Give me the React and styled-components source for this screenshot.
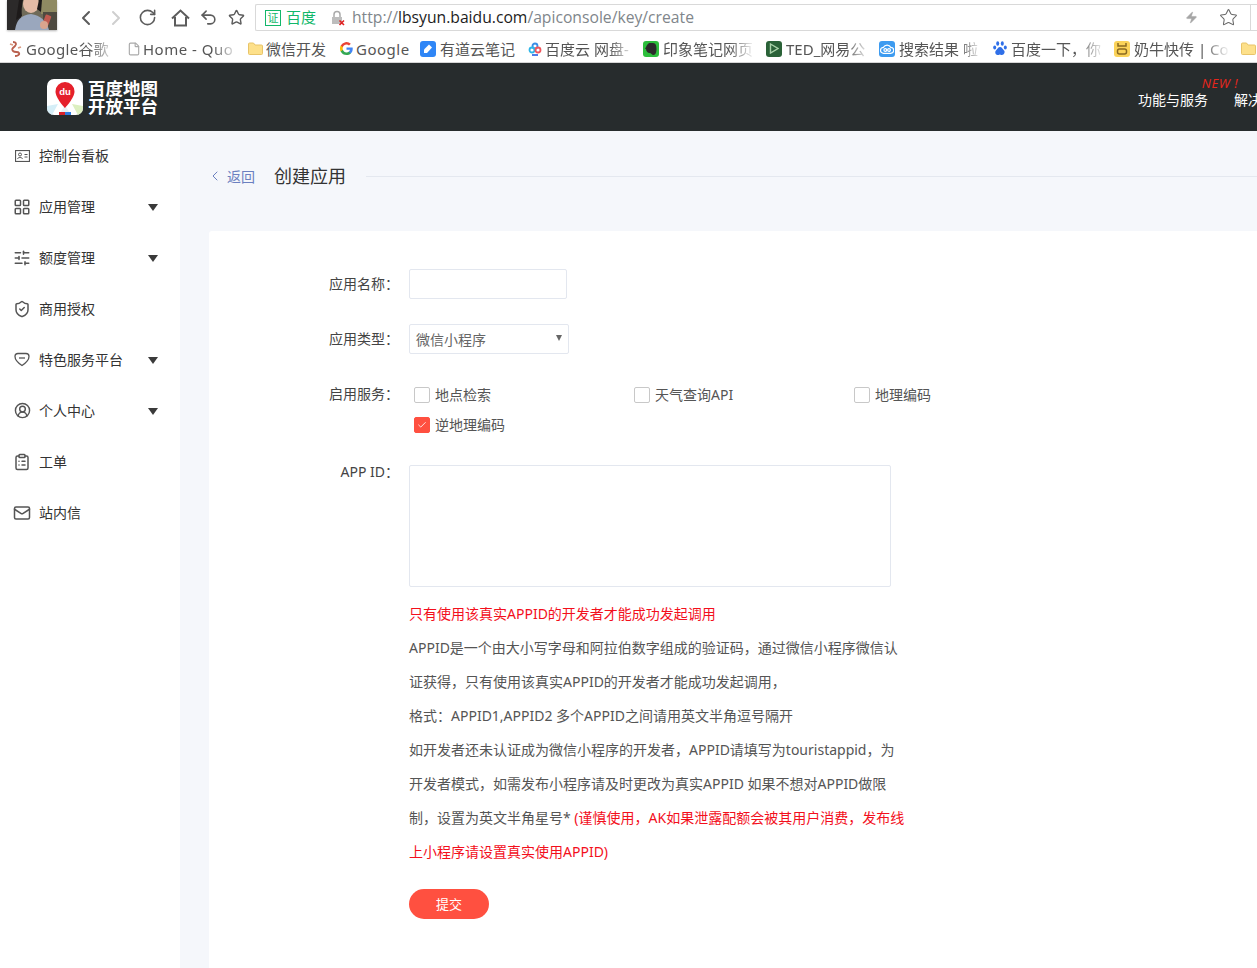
import React from 'react';
import styled, { createGlobalStyle } from 'styled-components';
import { ChevronLeft, ChevronRight, RotateCw, Undo2, Star, LayoutGrid, SlidersHorizontal, ShieldCheck, CircleUserRound, ClipboardList, Mail, Zap, Check, File } from 'lucide-react';

const GlobalStyle = createGlobalStyle`
  html, body { margin: 0; padding: 0; height: 100%; overflow: hidden; background: #fff; }
  body { font-family: "Noto Sans", "Noto Sans CJK SC", sans-serif; color: #333; }
  #root { height: 100%; }
  * { box-sizing: border-box; }
`;

const Page = styled.div`
  width: 1257px;
  height: 968px;
  display: flex;
  flex-direction: column;
  overflow: hidden;
`;

const Toolbar = styled.div`
  height: 33px;
  display: flex;
  align-items: flex-start;
  flex-shrink: 0;
`;

const Avatar = styled.div`
  width: 50px;
  height: 30px;
  margin-left: 7px;
  flex-shrink: 0;
  overflow: hidden;
  box-shadow: 0 1px 2px rgba(0,0,0,.3);
  svg { display: block; }
`;

const NavIcons = styled.div`
  display: flex;
  align-items: center;
  height: 35px;
  width: 198px;
  padding-left: 14px;
  flex-shrink: 0;
`;

const NavBtn = styled.div`
  width: ${p => p.$w}px;
  height: 25px;
  display: flex;
  align-items: center;
  justify-content: center;
  flex-shrink: 0;
  color: ${p => (p.$off ? '#cfcfcf' : '#5c5c5c')};
`;

const UrlBar = styled.div`
  margin-top: 4px;
  width: 1010px;
  height: 27px;
  border: 1px solid #d9d9d9;
  border-right: none;
  border-radius: 2px 0 0 2px;
  display: flex;
  align-items: center;
  padding-left: 9px;
  flex-shrink: 0;
`;

const CertBadge = styled.span`
  width: 16px;
  height: 16px;
  border: 1px solid #12b76a;
  color: #12b76a;
  font-size: 11px;
  line-height: 14px;
  text-align: center;
  flex-shrink: 0;
`;

const CertName = styled.span`
  color: #12b76a;
  font-size: 15px;
  margin-left: 5px;
  margin-bottom: 2px;
  width: 44px;
  flex-shrink: 0;
`;

const LockWrap = styled.span`
  width: 22px;
  display: flex;
  flex-shrink: 0;
`;

const Url = styled.span`
  font-family: "Open Sans", sans-serif;
  font-size: 15.7px;
  margin-bottom: 2px;
  color: #80868b;
  white-space: nowrap;
  b { font-weight: 400; color: #1c1c1c; }
`;

const UrlRight = styled.div`
  margin-left: auto;
  display: flex;
  align-items: center;
  color: #a5a5a5;
  gap: 21px;
  padding-right: 12px;
  height: 100%;
`;

const UrlEdge = styled.div`
  width: 1px;
  height: 25px;
  background: #d9d9d9;
  margin-right: 14px;
`;

const Bookmarks = styled.div`
  height: 30px;
  display: flex;
  align-items: center;
  padding: 2px 0 0 7px;
  border-bottom: 1px solid #d5d5d5;
  flex-shrink: 0;
  overflow: hidden;
`;

const Bookmark = styled.div`
  width: ${p => p.$w}px;
  flex-shrink: 0;
  display: flex;
  align-items: center;
  gap: ${p => p.$gap}px;
`;

const BmIcon = styled.span`
  width: 16px;
  height: 16px;
  flex-shrink: 0;
  border-radius: 3px;
  display: flex;
  align-items: center;
  justify-content: center;
  background: ${p => p.$bg || 'transparent'};
  svg { display: block; }
`;

const BmLabel = styled.span`
  width: ${p => p.$w}px;
  white-space: nowrap;
  overflow: hidden;
  font-size: 15px;
  line-height: 20px;
  letter-spacing: ${p => p.$ls || 0}px;
  color: #555;
  -webkit-mask-image: ${p => (p.$fade ? 'linear-gradient(90deg, #000 72%, transparent 100%)' : 'none')};
  mask-image: ${p => (p.$fade ? 'linear-gradient(90deg, #000 72%, transparent 100%)' : 'none')};
`;

const Header = styled.header`
  height: 68px;
  background: #272c2d;
  display: flex;
  align-items: center;
  justify-content: space-between;
  padding-left: 47px;
  flex-shrink: 0;
  overflow: hidden;
`;

const Logo = styled.div`
  display: flex;
  align-items: center;
  gap: 5px;
`;

const LogoMark = styled.div`
  width: 36px;
  height: 36px;
  svg { display: block; }
`;

const LogoText = styled.div`
  color: #fff;
  font-size: 17.5px;
  line-height: 18.5px;
  font-weight: 700;
  width: 71px;
`;

const TopNav = styled.nav`
  width: 119px;
  flex-shrink: 0;
  display: flex;
  gap: 26px;
  white-space: nowrap;
  padding-top: 5px;
`;

const TopLink = styled.a`
  color: #fff;
  font-size: 14px;
  line-height: 20px;
  position: relative;
  flex-shrink: 0;
`;

const NewTag = styled.i`
  position: absolute;
  right: -30px;
  top: -14px;
  color: #e8261c;
  font-size: 13px;
  line-height: 14px;
  letter-spacing: 0.5px;
  font-family: "Open Sans", sans-serif;
`;

const Body = styled.div`
  flex: 1;
  display: flex;
  min-height: 0;
`;

const Side = styled.aside`
  width: 180px;
  background: #fff;
  flex-shrink: 0;
`;

const SideItem = styled.div`
  height: 51px;
  display: flex;
  align-items: center;
  padding-left: 14px;
  font-size: 14px;
  color: #333;
`;

const SideIcon = styled.span`
  width: 16px;
  height: 16px;
  margin-bottom: 2px;
  display: flex;
  align-items: center;
  justify-content: center;
  color: #555;
  flex-shrink: 0;
  svg { flex-shrink: 0; }
`;

const SideText = styled.span`
  margin: 0 0 4px 9px;
  flex: 1;
`;

const Caret = styled.span`
  width: 0;
  height: 0;
  border-left: 5px solid transparent;
  border-right: 5px solid transparent;
  border-top: 7px solid #3a3a3a;
  margin-right: 22px;
`;

const Main = styled.main`
  flex: 1;
  background: #f5f7fb;
  padding: 33px 0 0 29px;
  display: flex;
  flex-direction: column;
  min-width: 0;
`;

const TitleRow = styled.div`
  height: 24px;
  display: flex;
  align-items: center;
  margin-bottom: 43px;
  flex-shrink: 0;
`;

const BackLink = styled.a`
  display: flex;
  align-items: center;
  color: #6b80c0;
  font-size: 14px;
  gap: 4px;
  margin-right: 19px;
  margin-left: -2px;
`;

const Title = styled.h1`
  margin: 0;
  font-size: 18px;
  font-weight: 400;
  color: #333;
  line-height: 24px;
`;

const Rule = styled.div`
  flex: 1;
  height: 1px;
  background: #e4e8ef;
  margin-left: 20px;
`;

const Card = styled.section`
  flex: 1;
  background: #fff;
  border-radius: 3px 0 0 0;
  padding: 38px 0 0 100px;
`;

const FormRow = styled.div`
  display: grid;
  grid-template-columns: 90px 1fr;
  column-gap: 10px;
  margin-bottom: ${p => p.$mb || 25}px;
`;

const Label = styled.label`
  font-size: 14px;
  line-height: 30px;
  height: 30px;
  color: #444;
  text-align: right;
  white-space: nowrap;
  margin-top: ${p => p.$top || 0}px;
`;

const TextInput = styled.div`
  width: 158px;
  height: 30px;
  border: 1px solid #e3e7ef;
  border-radius: 2px;
  background: #fff;
`;

const Select = styled.div`
  width: 160px;
  height: 30px;
  border: 1px solid #e3e7ef;
  border-radius: 2px;
  display: flex;
  align-items: center;
  justify-content: space-between;
  padding: 0 6px;
  font-size: 14px;
  color: #666;
`;

const SelectArrow = styled.span`
  width: 0;
  height: 0;
  border-left: 3px solid transparent;
  border-right: 3px solid transparent;
  border-top: 6px solid #666;
  margin-top: -2px;
`;

const Checks = styled.div`
  display: grid;
  grid-template-columns: repeat(3, 220px);
  grid-auto-rows: 30px;
  padding-left: 5px;
  margin-top: 1px;
`;

const CheckItem = styled.div`
  display: flex;
  align-items: center;
  gap: 5px;
  font-size: 14px;
  color: #555;
  white-space: nowrap;
`;

const CheckText = styled.span`
  margin-bottom: 2px;
`;

const Box = styled.span`
  width: 16px;
  height: 16px;
  border-radius: 2px;
  border: 1px solid ${p => (p.$on ? '#ff5040' : '#c8c8c8')};
  background: ${p => (p.$on ? '#ff5040' : '#fff')};
  display: flex;
  align-items: center;
  justify-content: center;
  color: #fff;
  flex-shrink: 0;
`;

const TextArea = styled.div`
  width: 482px;
  height: 122px;
  border: 1px solid #e3e7ef;
  border-radius: 2px;
`;

const Help = styled.div`
  margin: 10px 0 0 100px;
  width: 520px;
  font-size: 14px;
  line-height: 34px;
  color: #555;
`;

const HelpLine = styled.div`
  white-space: nowrap;
  height: 34px;
`;

const Red = styled.span`
  color: #f30f1c;
`;

const Submit = styled.button`
  display: block;
  margin: 20px 0 0 100px;
  width: 80px;
  height: 30px;
  border: none;
  border-radius: 15px;
  background: #ff5040;
  color: #fff;
  font-family: inherit;
  font-size: 13px;
  padding: 0 0 2px;
`;

function AvatarPhoto() {
  return (
    <svg width="50" height="30" viewBox="0 0 50 30">
      <rect width="50" height="30" fill="#6f6a58" />
      <rect x="0" y="0" width="14" height="30" fill="#2c2a2a" />
      <rect x="34" y="0" width="16" height="14" fill="#8f8a62" />
      <rect x="36" y="12" width="14" height="18" fill="#4e4a40" />
      <path d="M8 30 Q10 15 24 14 Q38 16 42 30 Z" fill="#9aa7bd" />
      <ellipse cx="24" cy="4" rx="8" ry="9" fill="#e3bba6" />
      <path d="M12 0 L16 0 Q14 10 15 16 L9 20 Z" fill="#1d1a1a" />
      <path d="M32 0 L35 0 L34 12 L30 9 Z" fill="#1d1a1a" />
      <rect x="37" y="15" width="6" height="10" rx="1" fill="#c05a50" transform="rotate(20 40 20)" />
      <ellipse cx="37" cy="25" rx="4" ry="4" fill="#d9a48e" />
    </svg>
  );
}

function HomeIcon() {
  return (
    <svg width="19" height="18" viewBox="0 0 19 18" fill="none" stroke="currentColor" strokeWidth="2">
      <path d="M1 9.5 9.5 1.5 18 9.5" />
      <path d="M4 8v8.5h11V8" />
    </svg>
  );
}

function LockIcon() {
  return (
    <svg width="16" height="16" viewBox="0 0 16 16">
      <path d="M4 7V4.5a3 3 0 0 1 6 0V7" fill="none" stroke="#aaa" strokeWidth="1.5" />
      <rect x="2" y="7" width="10" height="7" fill="#bdbdbd" />
      <path d="M9.5 10.5 14 15M14 10.5 9.5 15" stroke="#e02020" strokeWidth="1.6" />
    </svg>
  );
}

function Folder() {
  return (
    <svg width="15" height="13" viewBox="0 0 15 13">
      <path d="M.5 2a1 1 0 0 1 1-1h4l1.5 2h6.5a1 1 0 0 1 1 1v7.5a1 1 0 0 1-1 1h-12a1 1 0 0 1-1-1z" fill="#fde08a" stroke="#e8c469" />
    </svg>
  );
}

function GoogleG() {
  return (
    <svg width="13" height="13" viewBox="0 0 24 24">
      <path d="M23.5 12.3c0-.8-.1-1.600-.2-2.300H12v4.500h6.500a5.500 5.500 0 0 1-2.400 3.600v3h3.900c2.200-2.100 3.500-5.200 3.500-8.800z" fill="#4285f4" />
      <path d="M12 24c3.200 0 6-1.100 8-2.900l-3.900-3c-1.100.7-2.500 1.200-4.100 1.200-3.100 0-5.800-2.100-6.700-5H1.300v3.100A12 12 0 0 0 12 24z" fill="#34a853" />
      <path d="M5.300 14.300a7.200 7.200 0 0 1 0-4.600V6.600h-4a12 12 0 0 0 0 10.800z" fill="#fbbc05" />
      <path d="M12 4.800c1.800 0 3.300.6 4.600 1.800L20 3.200A12 12 0 0 0 1.300 6.600l4 3.100c.9-2.800 3.600-4.900 6.700-4.900z" fill="#ea4335" />
    </svg>
  );
}

function Dragon() {
  return (
    <svg width="15" height="16" viewBox="0 0 15 16" fill="none" stroke="#b9604e" strokeWidth="1.800">
      <path d="M5 1c3 0 4 2 2 4S3 8 5 10s5 0 6 2-2 3-4 3" />
      <path d="M2 3l3 1M10 7l3-1" stroke="#d99a80" />
    </svg>
  );
}

function YoudaoIcon() {
  return (
    <svg width="10" height="10" viewBox="0 0 10 10"><path d="M1 9V5.500L6 .5l3 3-5 5.500z" fill="#fff" /></svg>
  );
}

function BaiduCloud() {
  return (
    <svg width="14" height="14" viewBox="0 0 14 14" fill="none" strokeWidth="1.800">
      <circle cx="7" cy="4" r="2.500" stroke="#3a8ee6" />
      <circle cx="4" cy="8" r="2.500" stroke="#2fb6e8" />
      <circle cx="10" cy="8" r="2.500" stroke="#f0565e" />
      <path d="M4 13h6" stroke="#3a6fe6" />
    </svg>
  );
}

function Elephant() {
  return (
    <svg width="12" height="14" viewBox="0 0 12 14">
      <path d="M2 3 4 1h4c3 0 3.500 3 3.500 6s-1 6-3 6-2-2-4-2S1 9 1 7H0z" fill="#2b2b2b" />
    </svg>
  );
}

function TedIcon() {
  return (
    <svg width="10" height="11" viewBox="0 0 10 11"><path d="M1.500 1 9 5.500 1.500 10z" fill="none" stroke="#a9d2a9" strokeWidth="1.400" /></svg>
  );
}

function CloudSearch() {
  return (
    <svg width="14" height="10" viewBox="0 0 14 10" fill="none" stroke="#fff" strokeWidth="1.200">
      <path d="M3.500 9.300a3 3 0 0 1 0-6 4 4 0 0 1 7.200 0 3 3 0 0 1 0 6z" />
      <circle cx="5.300" cy="6" r="1.400" />
      <circle cx="9" cy="6" r="1.400" />
    </svg>
  );
}

function Paw() {
  return (
    <svg width="14" height="15" viewBox="0 0 14 15" fill="#2f6fe8">
      <ellipse cx="4.700" cy="2.500" rx="1.500" ry="2.200" />
      <ellipse cx="9.300" cy="2.500" rx="1.500" ry="2.200" />
      <ellipse cx="1.700" cy="6.500" rx="1.500" ry="2" />
      <ellipse cx="12.300" cy="6.500" rx="1.500" ry="2" />
      <path d="M7 6c2 0 2.500 2 4 3.500S11 14 9 14 7.500 13.400 7 13.400 6.500 14 4.500 14 1.500 11 3 9.500 5 6 7 6z" />
    </svg>
  );
}

function Cow() {
  return (
    <svg width="12" height="13" viewBox="0 0 12 13" fill="none" stroke="#8a6a22" strokeWidth="1.500">
      <path d="M2 1v3h8V1" />
      <rect x="1.500" y="7" width="9" height="5" rx="2" />
    </svg>
  );
}

function ProfileCard() {
  return (
    <svg width="15" height="12" viewBox="0 0 15 12" fill="none" stroke="currentColor">
      <rect x=".5" y=".5" width="14" height="11" strokeWidth="1.200" />
      <circle cx="5" cy="4.500" r="1.500" strokeWidth="1" />
      <path d="M2.500 9c.3-2 4.700-2 5 0M9.500 4.500h3M9.500 7h3" strokeWidth="1" />
    </svg>
  );
}

function SpecialIcon() {
  return (
    <svg width="16" height="15" viewBox="0 0 16 14" fill="none" stroke="currentColor" strokeWidth="1.300">
      <path d="M4 1h8a3 3 0 0 1 3 3c0 3-4 7-7 9-3-2-7-6-7-9a3 3 0 0 1 3-3z" />
      <path d="M5 5.500h6" />
    </svg>
  );
}

function LogoPin() {
  return (
    <svg width="36" height="36" viewBox="0 0 36 36">
      <rect width="36" height="36" rx="7" fill="#fff" />
      <path d="M0 27 L11 25 L5 36 H7 A7 7 0 0 1 0 29z" fill="#d5eef7" />
      <path d="M25 25 L36 27 V29 A7 7 0 0 1 29 36 H31z" fill="#dcefc0" />
      <path d="M18 26 L12 36 H24z" fill="#eaf2f7" />
      <rect x="12" y="33" width="6" height="3" fill="#d8232a" />
      <rect x="18" y="33" width="6" height="3" fill="#2f7de1" />
      <path d="M18 3a9.500 9.500 0 0 1 9.500 9.500C27.500 19 18 29 18 29S8.500 19 8.500 12.500A9.500 9.500 0 0 1 18 3z" fill="#e5202b" />
      <text x="18" y="15.500" textAnchor="middle" fontSize="9.500" fontWeight="700" fill="#fff" fontFamily="Liberation Sans, sans-serif">du</text>
    </svg>
  );
}

const bookmarks = [
  { w: 119, lw: 90, gap: 3, ls: 0.3, icon: <Dragon />, text: 'Google谷歌', fade: true },
  { w: 121, lw: 96, gap: 1, ls: 0.5, icon: <File size={14} color="#aaa" />, text: 'Home - Quo', fade: true },
  { w: 91, lw: 62, gap: 3, icon: <Folder />, text: '微信开发' },
  { w: 82, lw: 56, gap: 2, ls: 0.5, icon: <GoogleG />, text: 'Google' },
  { w: 107, lw: 78, gap: 4, icon: <YoudaoIcon />, bg: '#2f86f6', text: '有道云笔记' },
  { w: 116, lw: 90, gap: 2, icon: <BaiduCloud />, text: '百度云 网盘-', fade: true },
  { w: 123, lw: 92, gap: 4, icon: <Elephant />, bg: '#2dbe3c', text: '印象笔记网页', fade: true },
  { w: 113, lw: 84, gap: 4, icon: <TedIcon />, bg: '#2a6238', text: 'TED_网易公', fade: true },
  { w: 113, lw: 84, gap: 4, icon: <CloudSearch />, bg: '#3d9bf0', text: '搜索结果 啦', fade: true },
  { w: 122, lw: 94, gap: 3, icon: <Paw />, text: '百度一下，你', fade: true },
  { w: 126, lw: 96, gap: 4, icon: <Cow />, bg: '#fbd35a', text: '奶牛快传 | Co', fade: true },
  { w: 20, lw: 0, gap: 0, icon: <Folder />, text: '' },
];

const sideItems = [
  { icon: <ProfileCard />, text: '控制台看板' },
  { icon: <LayoutGrid size={18} strokeWidth={2} />, text: '应用管理', caret: true },
  { icon: <SlidersHorizontal size={18} strokeWidth={2} />, text: '额度管理', caret: true },
  { icon: <ShieldCheck size={18} strokeWidth={2} />, text: '商用授权' },
  { icon: <SpecialIcon />, text: '特色服务平台', caret: true },
  { icon: <CircleUserRound size={17} strokeWidth={2} />, text: '个人中心', caret: true },
  { icon: <ClipboardList size={18} strokeWidth={2} />, text: '工单' },
  { icon: <Mail size={18} strokeWidth={2} />, text: '站内信' },
];

const services = [
  { name: '地点检索' },
  { name: '天气查询API' },
  { name: '地理编码' },
  { name: '逆地理编码', on: true },
];

export default function App() {
  return (
    <Page>
      <GlobalStyle />
      <Toolbar>
        <Avatar><AvatarPhoto /></Avatar>
        <NavIcons>
          <NavBtn $w={30}><ChevronLeft size={24} strokeWidth={2} /></NavBtn>
          <NavBtn $w={30} $off><ChevronRight size={24} strokeWidth={2} /></NavBtn>
          <NavBtn $w={32}><RotateCw size={19} strokeWidth={2} /></NavBtn>
          <NavBtn $w={34}><HomeIcon /></NavBtn>
          <NavBtn $w={22}><Undo2 size={19} strokeWidth={2} /></NavBtn>
          <NavBtn $w={34}><Star size={17} strokeWidth={2} /></NavBtn>
        </NavIcons>
        <UrlBar>
          <CertBadge>证</CertBadge>
          <CertName>百度</CertName>
          <LockWrap><LockIcon /></LockWrap>
          <Url>http://<b>lbsyun.baidu.com</b>/apiconsole/key/create</Url>
          <UrlRight>
            <Zap size={13} fill="currentColor" strokeWidth={1} />
            <Star size={19} strokeWidth={1.300} color="#666" />
          </UrlRight>
          <UrlEdge />
        </UrlBar>
      </Toolbar>

      <Bookmarks>
        {bookmarks.map((b, i) => (
          <Bookmark key={i} $w={b.w} $gap={b.gap}>
            <BmIcon $bg={b.bg}>{b.icon}</BmIcon>
            <BmLabel $w={b.lw} $ls={b.ls} $fade={b.fade}>{b.text}</BmLabel>
          </Bookmark>
        ))}
      </Bookmarks>

      <Header>
        <Logo>
          <LogoMark><LogoPin /></LogoMark>
          <LogoText>百度地图开放平台</LogoText>
        </Logo>
        <TopNav>
          <TopLink>功能与服务<NewTag>NEW !</NewTag></TopLink>
          <TopLink>解决方案</TopLink>
        </TopNav>
      </Header>

      <Body>
        <Side>
          {sideItems.map(item => (
            <SideItem key={item.text}>
              <SideIcon>{item.icon}</SideIcon>
              <SideText>{item.text}</SideText>
              {item.caret && <Caret />}
            </SideItem>
          ))}
        </Side>
        <Main>
          <TitleRow>
            <BackLink><ChevronLeft size={16} strokeWidth={1.500} />返回</BackLink>
            <Title>创建应用</Title>
            <Rule />
          </TitleRow>
          <Card>
            <FormRow>
              <Label>应用名称：</Label>
              <TextInput />
            </FormRow>
            <FormRow>
              <Label>应用类型：</Label>
              <Select>微信小程序<SelectArrow /></Select>
            </FormRow>
            <FormRow>
              <Label>启用服务：</Label>
              <Checks>
                {services.map(s => (
                  <CheckItem key={s.name}>
                    <Box $on={s.on}>{s.on && <Check size={10} strokeWidth={2} />}</Box>
                    <CheckText>{s.name}</CheckText>
                  </CheckItem>
                ))}
              </Checks>
            </FormRow>
            <FormRow $mb={1}>
              <Label $top={-8}>APP ID：</Label>
              <TextArea />
            </FormRow>
            <Help>
              <HelpLine><Red>只有使用该真实APPID的开发者才能成功发起调用</Red></HelpLine>
              <HelpLine>APPID是一个由大小写字母和阿拉伯数字组成的验证码，通过微信小程序微信认</HelpLine>
              <HelpLine>证获得，只有使用该真实APPID的开发者才能成功发起调用，</HelpLine>
              <HelpLine>格式：APPID1,APPID2 多个APPID之间请用英文半角逗号隔开</HelpLine>
              <HelpLine>如开发者还未认证成为微信小程序的开发者，APPID请填写为touristappid，为</HelpLine>
              <HelpLine>开发者模式，如需发布小程序请及时更改为真实APPID 如果不想对APPID做限</HelpLine>
              <HelpLine>制，设置为英文半角星号* <Red>(谨慎使用，AK如果泄露配额会被其用户消费，发布线</Red></HelpLine>
              <HelpLine><Red>上小程序请设置真实使用APPID)</Red></HelpLine>
            </Help>
            <Submit>提交</Submit>
          </Card>
        </Main>
      </Body>
    </Page>
  );
}
